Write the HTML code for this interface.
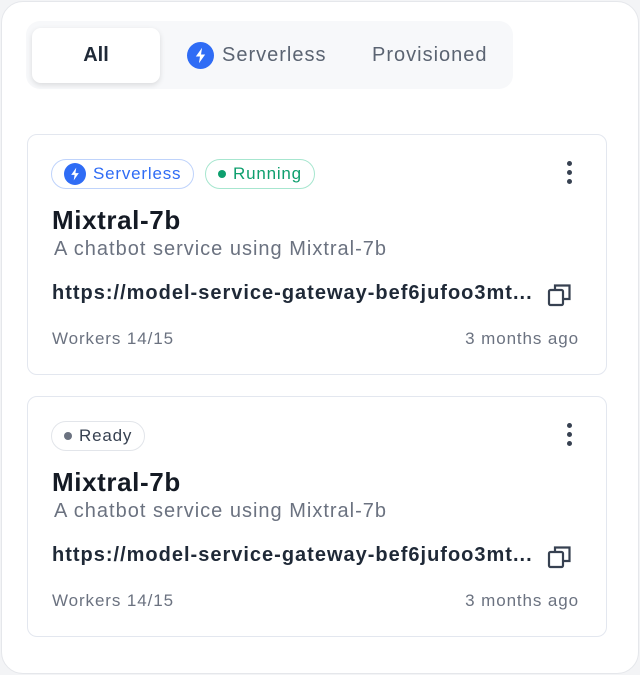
<!DOCTYPE html>
<html><head><style>
*{box-sizing:border-box;margin:0;padding:0}
body{width:640px;height:675px;background:#f3f4f6;font-family:"Liberation Sans",Arial,sans-serif;position:relative;overflow:hidden}
.outer{position:absolute;left:1px;top:1px;width:638px;height:673px;background:#fff;border:1px solid #e5e7eb;border-radius:22px}
.tabs{position:absolute;left:26px;top:21px;width:487px;height:68px;background:#f7f8fa;border-radius:14px}
.act{position:absolute;left:32px;top:28px;width:128px;height:55px;background:#fff;border-radius:9px;box-shadow:0 2px 6px rgba(0,0,0,.12);font-weight:bold;font-size:20px;color:#1f2937;text-align:center;line-height:55px}
.tab{position:absolute;top:28px;height:55px;line-height:55px;font-size:20px;color:#5b6472;letter-spacing:1px}
.card{position:absolute;left:27px;width:580px;height:241px;border:1.5px solid #e3e7ef;border-radius:10px;background:#fff}
.badge{position:absolute;top:24px;height:30px;border-radius:15px;font-size:17px;line-height:28px;display:flex;align-items:center;gap:7px;padding:0 12px;letter-spacing:.8px}
.title{position:absolute;left:24px;top:70px;font-size:26px;font-weight:bold;color:#141a24;letter-spacing:.6px}
.sub{position:absolute;left:26px;top:103px;font-size:20px;color:#6b7280;letter-spacing:1px}
.url{position:absolute;left:24px;top:147px;font-size:20px;font-weight:bold;color:#1f2937;letter-spacing:1px}
.foot{position:absolute;top:194px;font-size:17px;color:#6b7280;letter-spacing:.9px}
.keb{position:absolute;left:539px;top:26px;width:8px}
.keb i{display:block;width:5px;height:5px;border-radius:50%;background:#374151;margin:0 0 4px 0}
.copy{position:absolute;left:519px;top:148px}
</style></head><body>
<div class="outer"></div>
<div class="tabs"></div>
<div class="act">All</div>
<div class="tab" style="left:187px;display:flex;align-items:center;gap:8px">
<svg width="27" height="27" viewBox="0 0 26 26"><circle cx="13" cy="13" r="13" fill="#2f6cf5"/><path d="M14.5 5.5 L8.5 14 H12.5 L11.5 20.5 L17.5 12 H13.5 Z" fill="#fff"/></svg>Serverless</div>
<div class="tab" style="left:372px">Provisioned</div>

<div class="card" style="top:134px">
<div class="badge" style="left:23px;border:1.5px solid #bfd3fb;color:#2f6cf5;padding-left:12px"><svg width="22" height="22" viewBox="0 0 26 26"><circle cx="13" cy="13" r="13" fill="#2f6cf5"/><path d="M14.5 5.5 L8.5 14 H12.5 L11.5 20.5 L17.5 12 H13.5 Z" fill="#fff"/></svg>Serverless</div>
<div class="badge" style="left:177px;border:1.5px solid #a7e6cf;color:#0e9f6e"><span style="width:8px;height:8px;border-radius:50%;background:#0e9f6e;display:inline-block"></span>Running</div>
<div class="keb"><i></i><i></i><i></i></div>
<div class="title">Mixtral-7b</div>
<div class="sub">A chatbot service using Mixtral-7b</div>
<div class="url">https://model-service-gateway-bef6jufoo3mt...</div>
<svg class="copy" width="26" height="24" viewBox="0 0 26 24" fill="none" stroke="#374151" stroke-width="2.2"><rect x="2" y="7" width="14" height="15" rx="1.5"/><path d="M8 7V2.5h14.5V16H16"/></svg>
<div class="foot" style="left:24px">Workers 14/15</div>
<div class="foot" style="right:27px">3 months ago</div>
</div>

<div class="card" style="top:396px">
<div class="badge" style="left:23px;border:1.5px solid #e2e5ea;color:#374151"><span style="width:8px;height:8px;border-radius:50%;background:#6b7280;display:inline-block"></span>Ready</div>
<div class="keb"><i></i><i></i><i></i></div>
<div class="title">Mixtral-7b</div>
<div class="sub">A chatbot service using Mixtral-7b</div>
<div class="url">https://model-service-gateway-bef6jufoo3mt...</div>
<svg class="copy" width="26" height="24" viewBox="0 0 26 24" fill="none" stroke="#374151" stroke-width="2.2"><rect x="2" y="7" width="14" height="15" rx="1.5"/><path d="M8 7V2.5h14.5V16H16"/></svg>
<div class="foot" style="left:24px">Workers 14/15</div>
<div class="foot" style="right:27px">3 months ago</div>
</div>
</body></html>
